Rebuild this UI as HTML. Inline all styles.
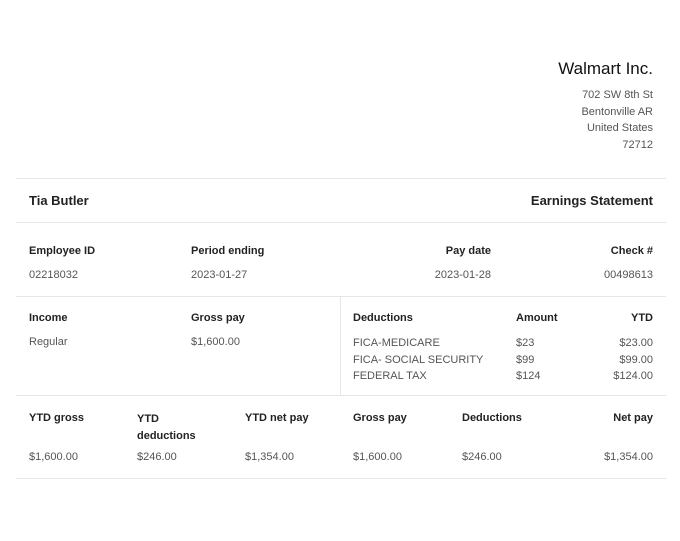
<!DOCTYPE html>
<html><head><style>
*{margin:0;padding:0;box-sizing:border-box}
body{width:680px;height:541px;background:#fff;font-family:"Liberation Sans",sans-serif;position:relative;overflow:hidden;color:#1a1a1a}
.a{position:absolute;white-space:nowrap}
.r{text-align:right}
.b{font-weight:bold;font-size:11px;color:#222}
.v{font-size:11px;color:#555}
.h{position:absolute;left:16px;width:650px;height:1px;background:#e6e6e6}
</style></head><body>
<div class="a r" style="right:27px;top:59px;font-size:17px;color:#111">Walmart Inc.</div>
<div class="a r v" style="right:27px;top:87px;line-height:16.5px">702 SW 8th St<br>Bentonville AR<br>United States<br>72712</div>
<div class="h" style="top:178px"></div>
<div class="a" style="left:29px;top:193px;font-size:13px;color:#222;font-weight:bold">Tia Butler</div>
<div class="a r" style="right:27px;top:193px;font-size:13px;color:#222;font-weight:bold">Earnings Statement</div>
<div class="h" style="top:222px"></div>
<div class="a b" style="left:29px;top:245px">Employee ID</div>
<div class="a b" style="left:191px;top:245px">Period ending</div>
<div class="a b r" style="right:189px;top:245px">Pay date</div>
<div class="a b r" style="right:27px;top:245px">Check #</div>
<div class="a v" style="left:29px;top:269px">02218032</div>
<div class="a v" style="left:191px;top:269px">2023-01-27</div>
<div class="a v r" style="right:189px;top:269px">2023-01-28</div>
<div class="a v r" style="right:27px;top:269px">00498613</div>
<div class="h" style="top:296px"></div>
<div class="a" style="left:340px;top:296px;width:1px;height:99px;background:#e6e6e6"></div>
<div class="a b" style="left:29px;top:312px">Income</div>
<div class="a b" style="left:191px;top:312px">Gross pay</div>
<div class="a v" style="left:29px;top:336px">Regular</div>
<div class="a v" style="left:191px;top:336px">$1,600.00</div>
<div class="a b" style="left:353px;top:312px">Deductions</div>
<div class="a b" style="left:516px;top:312px">Amount</div>
<div class="a b r" style="right:27px;top:312px">YTD</div>
<div class="a v" style="left:353px;top:335px;line-height:16.5px">FICA-MEDICARE<br>FICA- SOCIAL SECURITY<br>FEDERAL TAX</div>
<div class="a v" style="left:516px;top:335px;line-height:16.5px">$23<br>$99<br>$124</div>
<div class="a v r" style="right:27px;top:335px;line-height:16.5px">$23.00<br>$99.00<br>$124.00</div>
<div class="h" style="top:395px"></div>
<div class="a b" style="left:29px;top:412px">YTD gross</div>
<div class="a b" style="left:137px;top:411px;line-height:16.5px">YTD<br>deductions</div>
<div class="a b" style="left:245px;top:412px">YTD net pay</div>
<div class="a b" style="left:353px;top:412px">Gross pay</div>
<div class="a b" style="left:462px;top:412px">Deductions</div>
<div class="a b r" style="right:27px;top:412px">Net pay</div>
<div class="a v" style="left:29px;top:451px">$1,600.00</div>
<div class="a v" style="left:137px;top:451px">$246.00</div>
<div class="a v" style="left:245px;top:451px">$1,354.00</div>
<div class="a v" style="left:353px;top:451px">$1,600.00</div>
<div class="a v" style="left:462px;top:451px">$246.00</div>
<div class="a v r" style="right:27px;top:451px">$1,354.00</div>
<div class="h" style="top:478px"></div>
</body></html>
